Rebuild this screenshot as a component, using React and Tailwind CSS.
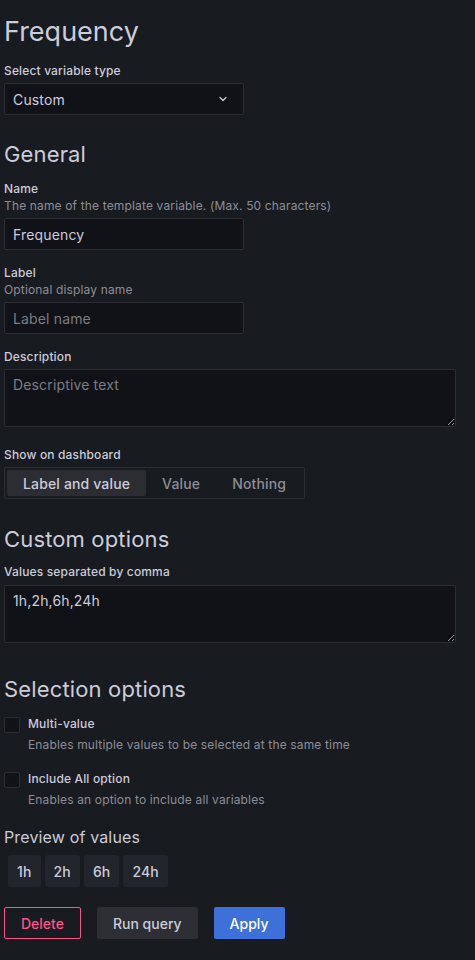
import { ChevronDown } from "lucide-react";

const Label = ({ children, description }) => (
  <div className="mb-[5px]">
    <div className="text-[12px] leading-[15px] font-medium text-[#ccccdc]">{children}</div>
    {description && (
      <div className="mt-[2px] text-[12px] leading-[15px] text-[#8e8e99]">{description}</div>
    )}
  </div>
);

const TextInput = ({ value, placeholder }) => (
  <input
    readOnly
    defaultValue={value}
    placeholder={placeholder}
    className="w-[240px] h-[32px] px-2 rounded-[2px] border border-[#2c2e33] bg-[#111217] text-[14px] tracking-[0.15px] text-[#ccccdc] placeholder:text-[#7b7c85] outline-none"
  />
);

const TextArea = ({ value, placeholder }) => (
  <textarea
    readOnly
    defaultValue={value}
    placeholder={placeholder}
    className="block w-[452px] h-[58px] px-2 py-[5px] rounded-[2px] border border-[#2c2e33] bg-[#111217] text-[14px] leading-[20px] tracking-[0.15px] text-[#ccccdc] placeholder:text-[#7b7c85] outline-none [color-scheme:dark]"
  />
);

const Heading = ({ children, className = "" }) => (
  <h3 className={`text-[22px] leading-[26px] font-normal text-[#ccccdc] ${className}`}>{children}</h3>
);

const CheckRow = ({ label, description, className = "" }) => (
  <div className={`flex items-start gap-2 ${className}`}>
    <div className="mt-[1px] w-4 h-4 shrink-0 rounded-[2px] border border-[#2c2e33] bg-[#111217]" />
    <div>
      <div className="text-[12px] leading-[16px] font-medium text-[#ccccdc]">{label}</div>
      <div className="mt-[5px] text-[12px] leading-[15px] text-[#8e8e99]">{description}</div>
    </div>
  </div>
);

export default function App() {
  const previews = ["1h", "2h", "6h", "24h"];
  return (
    <div
      className="min-h-screen bg-[#181b1f] px-1 pt-[16px] pb-6 text-[#ccccdc] tracking-[0.15px]"
      style={{ fontFamily: "Inter, 'Noto Sans', sans-serif" }}
    >
      <h2 className="text-[27px] leading-[32px] font-normal tracking-normal">Frequency</h2>

      <div className="mt-[15px]">
        <Label>Select variable type</Label>
        <div className="w-[240px] h-[32px] px-2 flex items-center justify-between rounded-[2px] border border-[#2c2e33] bg-[#111217] text-[14px]">
          <span>Custom</span>
          <ChevronDown className="w-3 h-3 mr-[6px] text-[#ccccdc]" strokeWidth={2.5} />
        </div>
      </div>

      <Heading className="mt-[26px]">General</Heading>

      <div className="mt-[14px]">
        <Label description="The name of the template variable. (Max. 50 characters)">Name</Label>
        <TextInput value="Frequency" />
      </div>

      <div className="mt-[15px]">
        <Label description="Optional display name">Label</Label>
        <TextInput placeholder="Label name" />
      </div>

      <div className="mt-[15px]">
        <Label>Description</Label>
        <TextArea placeholder="Descriptive text" />
      </div>

      <div className="mt-[20px]">
        <Label>Show on dashboard</Label>
        <div className="inline-flex h-[32px] p-[2px] rounded-[2px] border border-[#2c2e33]">
          <button className="px-4 rounded-[2px] bg-[#2b2d32] text-[14px] font-medium text-[#ccccdc]">Label and value</button>
          <button className="px-4 text-[14px] font-medium text-[#8e8e99]">Value</button>
          <button className="px-4 text-[14px] font-medium text-[#8e8e99]">Nothing</button>
        </div>
      </div>

      <Heading className="mt-[27px]">Custom options</Heading>

      <div className="mt-[12px]">
        <div className="mb-[6px] text-[12px] leading-[15px] font-medium">Values separated by comma</div>
        <TextArea value="1h,2h,6h,24h" />
      </div>

      <Heading className="mt-[33px]">Selection options</Heading>

      <CheckRow
        className="mt-[14px]"
        label="Multi-value"
        description="Enables multiple values to be selected at the same time"
      />
      <CheckRow
        className="mt-[19px]"
        label="Include All option"
        description="Enables an option to include all variables"
      />

      <h5 className="mt-[20px] text-[16px] leading-[20px] font-normal">Preview of values</h5>
      <div className="mt-[8px] ml-1 flex gap-1">
        {previews.map((p) => (
          <div
            key={p}
            className="h-[32px] px-[9px] flex items-center rounded-[3px] bg-[#22252b] text-[14px] font-medium text-[#ccccdc]"
          >
            {p}
          </div>
        ))}
      </div>

      <div className="mt-[20px] flex gap-4 tracking-normal">
        <button className="h-[32px] px-4 rounded-[2px] border border-[#ff5286] text-[14px] font-medium text-[#ff5286]">
          Delete
        </button>
        <button className="h-[32px] px-4 rounded-[2px] bg-[#2d2f34] text-[14px] font-medium text-[#ccccdc]">
          Run query
        </button>
        <button className="h-[32px] px-4 rounded-[2px] bg-[#3d71d9] text-[14px] font-medium text-white">
          Apply
        </button>
      </div>
    </div>
  );
}
